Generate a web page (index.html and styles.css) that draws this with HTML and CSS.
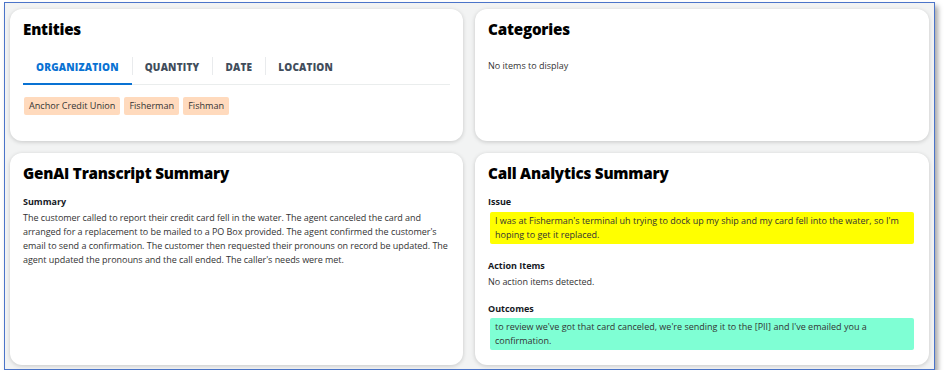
FILE: index.html
```html
<!DOCTYPE html>
<html>
<head>
<meta charset="utf-8">
<link rel="stylesheet" href="styles.css">
</head>
<body>
<div class="frame">
  <div class="grid">
    <section class="card">
      <h2 class="title">Entities</h2>
      <div class="tabs">
        <div class="tab active">ORGANIZATION</div>
        <div class="tab">QUANTITY</div>
        <div class="tab">DATE</div>
        <div class="tab">LOCATION</div>
      </div>
      <div class="chips">
        <span class="chip">Anchor Credit Union</span>
        <span class="chip">Fisherman</span>
        <span class="chip">Fishman</span>
      </div>
    </section>
    <section class="card">
      <h2 class="title">Categories</h2>
      <p class="empty">No items to display</p>
    </section>
    <section class="card">
      <h2 class="title">GenAI Transcript Summary</h2>
      <div class="label">Summary</div>
      <p class="text summary">The customer called to report their credit card fell in the water. The agent canceled the card and arranged for a replacement to be mailed to a PO Box provided. The agent confirmed the customer's email to send a confirmation. The customer then requested their pronouns on record be updated. The agent updated the pronouns and the call ended. The caller's needs were met.</p>
    </section>
    <section class="card">
      <h2 class="title">Call Analytics Summary</h2>
      <div class="label">Issue</div>
      <div class="hl yellow">I was at Fisherman's terminal uh trying to dock up my ship and my card fell into the water, so I'm hoping to get it replaced.</div>
      <div class="label after-hl">Action Items</div>
      <p class="text plain">No action items detected.</p>
      <div class="label after-text">Outcomes</div>
      <div class="hl green">to review we've got that card canceled, we're sending it to the [PII] and I've emailed you a confirmation.</div>
    </section>
  </div>
</div>
</body>
</html>
```

FILE: styles.css
```css
* { box-sizing: border-box; }
html, body { margin: 0; padding: 0; background: #ffffff; }
body { font-family: "Open Sans", "Noto Sans", sans-serif; color: #16191f; }

.frame {
  margin: 2px 0 0 4px;
  width: 931px;
  height: 368px;
  border: 1px solid #4b74c9;
  background: #f2f3f3;
  box-shadow: 3px 4px 5px rgba(0,0,0,0.35);
  padding: 6px 5px 4px 5px;
}

.grid {
  display: grid;
  grid-template-columns: 453px 454px;
  grid-template-rows: 132px 212px;
  column-gap: 12px;
  row-gap: 12px;
}

.card {
  background: #ffffff;
  border-radius: 12px;
  box-shadow: 0 1px 4px rgba(0,0,0,0.18);
  padding: 10px 10px 10px 13px;
}

.title {
  margin: 0;
  font-size: 15.2px;
  line-height: 20px;
  font-weight: 800;
  color: #000000;
  letter-spacing: -0.2px;
}

.tabs {
  display: flex;
  margin-top: 16px;
  border-bottom: 1px solid #eaeded;
  width: 427px;
}
.tab {
  position: relative;
  font-size: 10px;
  font-weight: 800;
  color: #414d5c;
  padding: 5px 13px 9px 13px;
  line-height: 14px;
  letter-spacing: 0.2px;
}
.tab + .tab::before {
  content: "";
  position: absolute;
  left: 0;
  top: 2px;
  height: 18px;
  border-left: 1px solid #e9ebed;
}
.tab.active {
  color: #0972d3;
  border-bottom: 2px solid #0972d3;
  margin-bottom: -1px;
}

.chips {
  display: flex;
  gap: 4px;
  margin-top: 12px;
  padding-left: 1px;
}
.chip {
  background: #ffdabd;
  border-radius: 2px;
  font-size: 9.1px;
  line-height: 18px;
  padding: 0 5px;
  color: #333333;
}

.empty {
  margin: 20px 0 0 0;
  font-size: 9px;
  line-height: 14px;
  color: #333333;
}

.label {
  margin-top: 12px;
  font-size: 9px;
  font-weight: 700;
  line-height: 14px;
  color: #16191f;
}
.label.after-hl { margin-top: 15px; }
.label.after-text { margin-top: 13px; }

.text {
  margin: 2px 0 0 0;
  font-size: 9px;
  line-height: 14px;
  letter-spacing: -0.04px;
  color: #333333;
}

.hl {
  margin: 3px 5px 0 2px;
  padding: 2px 5px;
  font-size: 9px;
  line-height: 14px;
  color: #333333;
  border-radius: 2px;
}
.green { margin-top: 2px; }
.yellow { background: #ffff00; }
.green { background: #7fffd4; }
```
